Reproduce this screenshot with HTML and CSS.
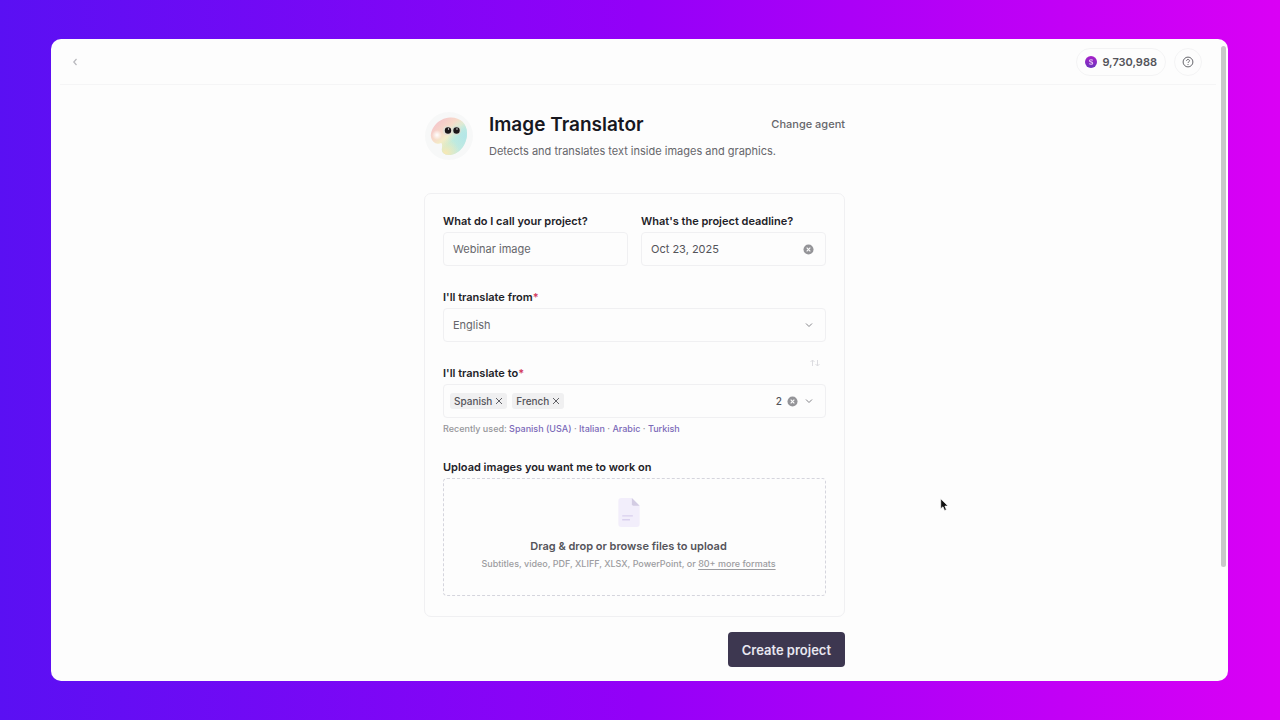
FILE: index.html
```html
<!DOCTYPE html>
<html lang="en">
<head>
    <meta charset="UTF-8">
    <title>Image Translator</title>
    <link rel="stylesheet" href="styles.css">
</head>
<body>

<div class="window">
    <div class="page">
        <header class="topbar">
            <button class="back" type="button" aria-label="Back">
                <svg width="6" height="10" viewBox="0 0 6 10"><path d="M4.5 2 1.8 5l2.7 3"/></svg>
            </button>
            <button class="credits" type="button">
                <svg width="12" height="12" viewBox="0 0 12 12">
                    <defs>
                        <linearGradient id="coin" x1="0" y1="0" x2="0" y2="1">
                            <stop offset="0" stop-color="#a81fc9"/>
                            <stop offset="1" stop-color="#6a35bd"/>
                        </linearGradient>
                    </defs>
                    <circle cx="6" cy="6" r="6" fill="url(#coin)"/>
                    <path d="M7.8 4.4C7.3 3.6 4.4 3.4 4.4 4.8c0 1.3 3.3.9 3.3 2.4 0 1.4-2.9 1.3-3.5.3" fill="none" stroke="#e3c4f2" stroke-width="1.1"/>
                </svg>
                9,730,988
            </button>
            <button class="help" type="button" aria-label="Help">
                <svg width="12" height="12" viewBox="0 0 12 12">
                    <circle cx="6" cy="6" r="4.9"/>
                    <path d="M4.5 4.9C4.5 3 7.5 3 7.5 4.8 7.5 5.9 6 5.9 6 7M6 8.1v.9"/>
                </svg>
            </button>
        </header>

        <main class="content">
            <div class="agent">
                <svg class="avatar" width="50" height="50" viewBox="0 0 50 50">
                    <defs>
                        <linearGradient id="body" x1="0.15" y1="0.05" x2="0.85" y2="0.9">
                            <stop offset="0" stop-color="#f4c3cb"/>
                            <stop offset="0.32" stop-color="#f7d9c9"/>
                            <stop offset="0.5" stop-color="#f3ecc9"/>
                            <stop offset="0.66" stop-color="#c3eddb"/>
                            <stop offset="1" stop-color="#c5eadf"/>
                        </linearGradient>
                        <radialGradient id="shade" cx="0.95" cy="0.5" r="0.5">
                            <stop offset="0" stop-color="#b4e6e8"/>
                            <stop offset="1" stop-color="#b4e6e8" stop-opacity="0"/>
                        </radialGradient>
                        <radialGradient id="glow" cx="0.4" cy="0.95" r="0.4">
                            <stop offset="0" stop-color="#f8e8b4"/>
                            <stop offset="1" stop-color="#f8e8b4" stop-opacity="0"/>
                        </radialGradient>
                        <radialGradient id="nose">
                            <stop offset="0" stop-color="#fff"/>
                            <stop offset="1" stop-color="#fff" stop-opacity="0"/>
                        </radialGradient>
                        <path id="blob" d="M7 25C6 17 14 6 26 5.500c10-.5 17 6 17 15.500C43 33 35 43 25 43c-5 0-8-3-7-7 .5-3 0-5-1-5-5 2-9-1-10-6z"/>
                    </defs>
                    <circle cx="25" cy="24" r="24" fill="#f7f8f8"/>
                    <use href="#blob" fill="url(#body)"/>
                    <use href="#blob" fill="url(#shade)"/>
                    <use href="#blob" fill="url(#glow)"/>
                    <circle cx="13" cy="23" r="5" fill="url(#nose)"/>
                    <circle cx="23.500" cy="18.500" r="4.800" fill="#e6dfd5"/>
                    <circle cx="32.500" cy="18.500" r="4.500" fill="#d5ded3"/>
                    <circle cx="24" cy="18.500" r="3.200" fill="#1b1719"/>
                    <circle cx="32.500" cy="18.500" r="3.200" fill="#1b1719"/>
                    <circle cx="24.500" cy="17" r="0.700" fill="#fff"/>
                    <circle cx="33" cy="17" r="0.700" fill="#fff"/>
                </svg>
                <div class="agent-text">
                    <div class="agent-head">
                        <h1>Image Translator</h1>
                        <a class="change" href="#">Change agent</a>
                    </div>
                    <p>Detects and translates text inside images and graphics.</p>
                </div>
            </div>

            <form id="project" class="card">
                <div class="row">
                    <div class="field">
                        <label for="name">What do I call your project?</label>
                        <div class="box"><input type="text" id="name" value="Webinar image"></div>
                    </div>
                    <div class="field">
                        <label for="deadline">What's the project deadline?</label>
                        <div class="box">
                            <input class="date" type="text" id="deadline" value="Oct 23, 2025">
                            <button class="clear" type="button" aria-label="Clear deadline">
                                <svg width="11" height="11" viewBox="0 0 12 12"><circle cx="6" cy="6" r="5.500"/><path d="m4 4 4 4m0-4L4 8"/></svg>
                            </button>
                        </div>
                    </div>
                </div>

                <div class="field">
                    <label for="from">I'll translate from<span class="required">*</span></label>
                    <select id="from">
                        <option>English</option>
                    </select>
                </div>

                <div class="field">
                    <div class="label-row">
                        <label for="to">I'll translate to<span class="required">*</span></label>
                        <button class="swap" type="button" aria-label="Swap languages">
                            <svg width="10" height="8" viewBox="0 0 10 8"><path d="M2.500 7V1M.5 3l2-2 2 2M7.500 1v6M5.500 5l2 2 2-2"/></svg>
                        </button>
                    </div>
                    <div class="box languages">
                        <span class="chip">Spanish
                            <button type="button" aria-label="Remove Spanish"><svg width="8" height="8" viewBox="0 0 8 8"><path d="m1 1 6 6m0-6L1 7"/></svg></button>
                        </span>
                        <span class="chip">French
                            <button type="button" aria-label="Remove French"><svg width="8" height="8" viewBox="0 0 8 8"><path d="m1 1 6 6m0-6L1 7"/></svg></button>
                        </span>
                        <input type="text" id="to">
                        <span class="count">2</span>
                        <button class="clear" type="button" aria-label="Clear languages">
                            <svg width="11" height="11" viewBox="0 0 12 12"><circle cx="6" cy="6" r="5.500"/><path d="m4 4 4 4m0-4L4 8"/></svg>
                        </button>
                        <button class="open" type="button" aria-label="Show languages">
                            <svg width="8" height="6" viewBox="0 0 8 6"><path d="m1 1.500 3 3 3-3"/></svg>
                        </button>
                    </div>
                    <p class="recent">Recently used: <a href="#">Spanish (USA)</a> · <a href="#">Italian</a> · <a href="#">Arabic</a> · <a href="#">Turkish</a></p>
                </div>

                <div class="field">
                    <label for="files">Upload images you want me to work on</label>
                    <div class="dropzone">
                        <input type="file" id="files" multiple hidden>
                        <svg width="22" height="29" viewBox="0 0 22 30">
                            <path d="M3 0h11l8 8v19a3 3 0 0 1-3 3H3a3 3 0 0 1-3-3V3a3 3 0 0 1 3-3z" fill="#f2eefb"/>
                            <path d="M14 0l8 8h-6.500A1.500 1.500 0 0 1 14 6.500z" fill="#d3cce3"/>
                            <path d="M4 18.500h11M4 22.500h8" stroke="#d9d0ee" stroke-width="1.500"/>
                        </svg>
                        <strong>Drag &amp; drop or browse files to upload</strong>
                        <p>Subtitles, video, PDF, XLIFF, XLSX, PowerPoint, or <a href="#">80+ more formats</a></p>
                    </div>
                </div>
            </form>

            <button class="create" type="submit" form="project">Create project</button>
        </main>
    </div>
    <div class="scrollbar"><div class="thumb"></div></div>
</div>

<svg class="cursor" width="9" height="14" viewBox="0 0 9 14"><path d="M.7.800v10l2.300-2 1.500 3.700 1.900-.8-1.500-3.600h3.200z"/></svg>

</body>
</html>
```
FILE: styles.css
```css
* { box-sizing: border-box; }
body {
    margin: 0;
    min-height: 100vh;
    padding: 39px 52px 39px 51px;
    display: flex;
    background: linear-gradient(90deg, #5a10f3 0%, #9400f8 50%, #da00f5 100%);
    font-family: Inter, "Liberation Sans", sans-serif;
    font-size: 11px;
    color: #54545a;
}
h1, p { margin: 0; }
button { padding: 0; border: none; background: none; font: inherit; color: inherit; cursor: pointer; }
svg { display: block; }
a { color: inherit; text-decoration: none; }

.window { flex: 1; display: flex; background: #fdfdfd; border-radius: 10px; overflow: hidden; }
.page { flex: 1; }
.scrollbar { width: 10px; padding: 7px 2px 0 3px; }
.thumb { height: 82%; background: #c8c8c8; border-radius: 3px; }

.topbar {
    display: flex;
    align-items: center;
    gap: 8px;
    height: 46px;
    margin: 0 2px 0 9px;
    padding: 0 14px 0 12px;
    border-bottom: 1px solid #f5f5f6;
}
.back { margin-right: auto; }
.back svg, .help svg { fill: none; stroke: #b8b8bd; stroke-width: 1.2; }
.credits {
    display: flex;
    align-items: center;
    gap: 5px;
    height: 28px;
    padding: 0 8px;
    border: 1px solid #f3f3f4;
    border-radius: 14px;
    font-weight: 600;
}
.help { display: flex; align-items: center; justify-content: center; width: 28px; height: 28px; border: 1px solid #f3f3f4; border-radius: 14px; }
.help svg { stroke: #66666c; stroke-width: 1; }

.content { width: 421px; margin: 0 auto; padding-top: 27px; display: flex; flex-direction: column; }
.agent { display: flex; gap: 15px; }
.agent-text { flex: 1; }
.agent-head { display: flex; justify-content: space-between; align-items: center; height: 24px; }
h1 { font-size: 19px; font-weight: 600; color: #17171f; }
.change { font-weight: 500; color: #66666b; }
.agent p { margin-top: 7px; line-height: 16px; color: #66666b; }

.card {
    display: flex;
    flex-direction: column;
    gap: 23px;
    margin-top: 31px;
    padding: 19px 18px 20px;
    border: 1px solid #f0f0f2;
    border-radius: 7px;
}
.row { display: grid; grid-template-columns: 1fr 1fr; gap: 13px; }
.field { display: flex; flex-direction: column; gap: 3px; min-width: 0; }
label { line-height: 16px; font-weight: 600; color: #222228; }
.required { color: #d23a5e; }
.box, select {
    display: flex;
    align-items: center;
    width: 100%;
    height: 34px;
    padding: 0 11px 0 9px;
    border: 1px solid #f0f0f2;
    border-radius: 4px;
    background: #fdfdfd;
}
input, select { font: inherit; color: #66666b; outline: none; }
input { flex: 1; min-width: 0; padding: 0; border: none; background: none; }
.date { color: #54545a; }
select {
    appearance: none;
    background: url("data:image/svg+xml,%3Csvg xmlns='http://www.w3.org/2000/svg' width='8' height='6' fill='none' stroke='%23848489'%3E%3Cpath d='m1 1.5 3 3 3-3'/%3E%3C/svg%3E") no-repeat right 12px center;
}
.clear circle { fill: #949498; }
.clear path { fill: none; stroke: #fdfdfd; stroke-width: 1.2; }

.label-row { display: flex; justify-content: space-between; }
.swap { align-self: flex-start; height: 8px; margin: -6px 6px 0 0; }
.swap svg { fill: none; stroke: #dcdce0; }
.languages { padding: 0 12px 0 6px; gap: 5px; font-size: 10px; }
.languages .open { margin-left: 2px; }
.chip { display: flex; align-items: center; gap: 3px; height: 16px; padding: 0 4px; border-radius: 3px; background: #f0f0f1; font-weight: 500; }
.chip path { stroke: #626267; }
.count { font-weight: 500; }
.open path { fill: none; stroke: #848489; }
.recent { line-height: 15px; font-size: 9px; font-weight: 500; color: #96969a; }
.recent a { color: #7b69b8; }

.dropzone {
    display: flex;
    flex-direction: column;
    align-items: center;
    height: 118px;
    padding: 19px 22px 0 10px;
    border: 1px dashed #d5d5dd;
    border-radius: 4px;
}
.dropzone strong { margin-top: 11px; line-height: 16px; font-weight: 600; }
.dropzone p { margin-top: 3px; line-height: 14px; font-size: 9px; font-weight: 500; color: #9c9ca0; }
.dropzone a { text-decoration: underline; text-underline-offset: 2px; }

.create { align-self: flex-end; margin-top: 15px; padding: 0 14px; height: 35px; border-radius: 4px; background: #3d3750; color: #e9e7f0; font-size: 13px; font-weight: 600; }

.cursor { position: absolute; left: 940px; top: 498px; fill: #111; stroke: #fff; stroke-width: 0.7; }
```
